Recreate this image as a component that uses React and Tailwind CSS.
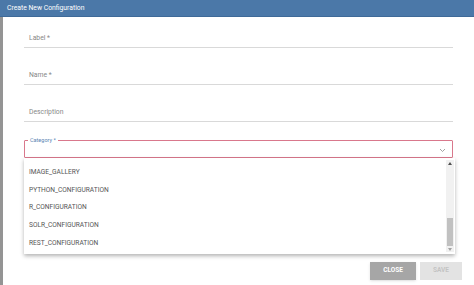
import React from 'react';

const font = { fontFamily: 'Roboto, "Liberation Sans", sans-serif' };

const options = [
  'IMAGE_GALLERY',
  'PYTHON_CONFIGURATION',
  'R_CONFIGURATION',
  'SOLR_CONFIGURATION',
  'REST_CONFIGURATION',
];

const Field = ({ label, className }) => (
  <div className={`h-[20px] flex items-end pb-[4px] pl-[5px] border-b border-[#d9d9d9] ${className}`}>
    <span className="text-[6.8px] leading-[10px] text-[#888]">{label}</span>
  </div>
);

const App = () => {
  return (
    <div className="w-[474px] h-[285px] flex flex-col bg-white overflow-hidden" style={font}>
      {/* Header */}
      <div className="h-[17px] shrink-0 bg-[#4b78a8] flex items-center pl-[7px] border-b border-[#3f6a98]">
        <span className="text-[6.8px] text-white">Create New Configuration</span>
      </div>

      <div className="flex flex-1 min-h-0">
        <div className="w-[3px] shrink-0 bg-[#949494]" />

        <div className="flex-1 flex flex-col pt-[11px] pl-[21px] pr-[21px] relative">
          <Field label="Label *" />
          <Field label="Name *" className="mt-[17px]" />
          <Field label="Description" className="mt-[17px]" />

          {/* Category select */}
          <div className="relative mt-[18px] h-[18px] border border-[#d9788c] rounded-[1px] flex items-center justify-end pr-[6px]">
            <span className="absolute -top-[5px] left-[3px] bg-white px-[2px] text-[5.5px] leading-[8px] text-[#5a84b4]">
              Category *
            </span>
            <svg width="7" height="5" viewBox="0 0 7 5" className="mt-[2px]">
              <path d="M1 1 L3.5 3.5 L6 1" fill="none" stroke="#8c8c8c" strokeWidth="0.8" />
            </svg>

            {/* Dropdown menu */}
            <div className="absolute left-[-1px] right-[-3px] top-[17px] h-[96px] bg-white shadow-[0_2px_4px_rgba(0,0,0,0.3)] flex z-10">
              <div className="flex-1 pt-[6px]">
                {options.map((o) => (
                  <div key={o} className="h-[17.7px] flex items-center pl-[5px] text-[6.6px] text-[#555]">
                    {o}
                  </div>
                ))}
              </div>
              <div className="w-[8px] my-[2px] mr-[1px] bg-[#f1f1f1] flex flex-col items-center">
                <div className="h-[6px] flex items-center">
                  <svg width="4" height="3" viewBox="0 0 4 3">
                    <path d="M0 3 L2 0 L4 3 Z" fill="#505050" />
                  </svg>
                </div>
                <div className="flex-1 w-full flex flex-col justify-end px-[1px]">
                  <div className="h-[28px] bg-[#c1c1c1]" />
                </div>
                <div className="h-[6px] flex items-center">
                  <svg width="4" height="3" viewBox="0 0 4 3">
                    <path d="M0 0 L2 3 L4 0 Z" fill="#a3a3a3" />
                  </svg>
                </div>
              </div>
            </div>
          </div>

          {/* Buttons */}
          <div className="mt-auto mb-[5px] -mr-[9px] flex justify-end gap-[4px]">
            <button className="w-[46px] h-[18px] bg-[#a6a6a6] text-white text-[6.5px] font-bold shadow-sm">
              CLOSE
            </button>
            <button className="w-[42px] h-[18px] bg-[#e3e3e3] text-[#c3c3c3] text-[6.5px] font-bold">
              SAVE
            </button>
          </div>
        </div>
      </div>
    </div>
  );
};

export default App;
